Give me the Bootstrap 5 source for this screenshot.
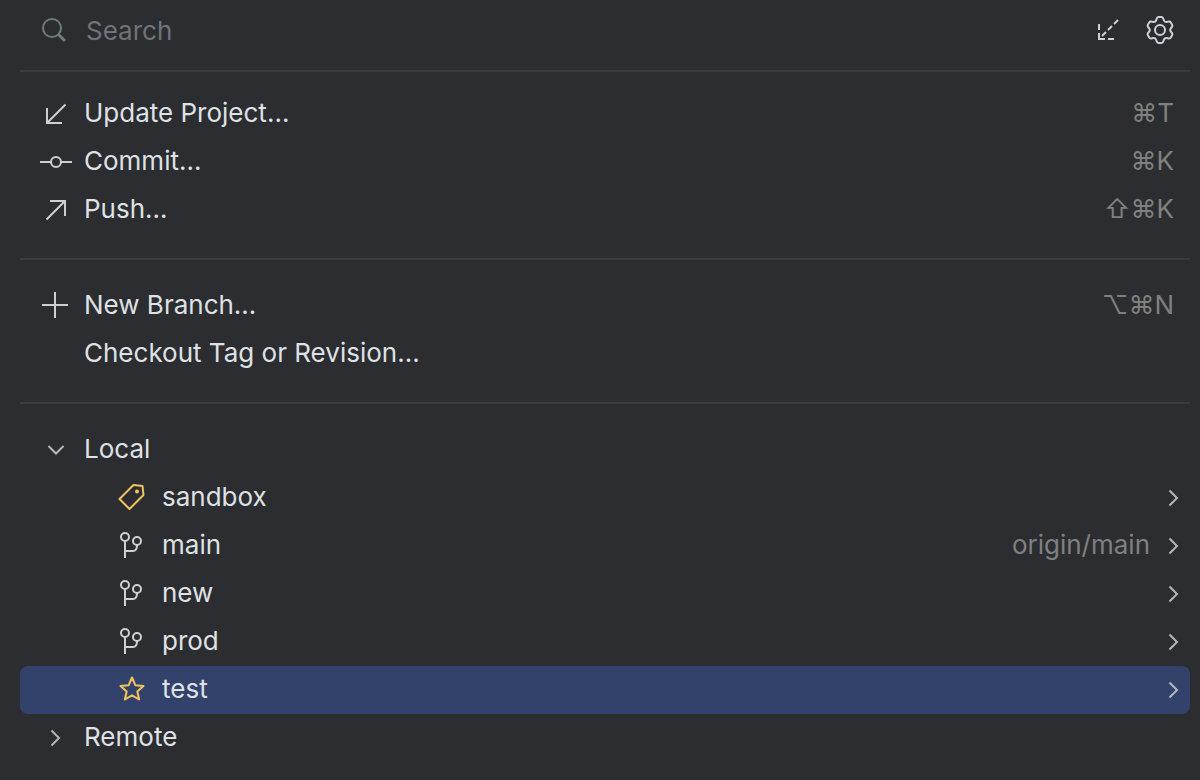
<!DOCTYPE html>
<html lang="en" data-bs-theme="dark">
<head>
<meta charset="utf-8">
<meta name="viewport" content="width=device-width, initial-scale=1">
<title>Git Branches</title>
<link href="https://cdn.jsdelivr.net/npm/bootstrap@5.3.0/dist/css/bootstrap.min.css" rel="stylesheet">
<style>
  body { background: #2b2d30; color: #dfe1e5; font-family: Inter, sans-serif; font-size: 26px; line-height: 46px; }
  .popup { min-height: 100vh; padding: 0 10px 0 20px; border-bottom: 3px solid #29262c; }
  .search-bar { height: 70px; padding: 0 14px 10px 18px; }
  .search-bar input { color: #dfe1e5; font-size: 26px; padding: 0; margin-left: 16px; }
  .search-bar input::placeholder { color: #6f737a; opacity: 1; }
  .tool { line-height: 0; color: #ced0d6; }
  .line { border-top: 2px solid #393b40; }
  .group { padding: 22px 0 24px; }
  .group-top { padding-top: 18px; }
  .entry { display: flex; align-items: center; width: 100%; height: 48px; padding: 0 16px 2px 20px; border: 0; border-radius: 8px; background: none; color: inherit; text-align: left; }
  .entry svg, .tool svg, .search-bar svg { flex: none; }
  .entry svg { color: #ced0d6; }
  .entry .label { margin-left: 12px; }
  .entry .label-plain { margin-left: 44px; }
  .branch { padding: 0 0 2px 96px; }
  .branch .label { margin-left: 14px; }
  .entry .chevron { color: #b4b8bf; }
  .selected { background: #33426b; }
  .hint { color: #808080; }
  .entry .fav { color: #f2c55c; }
</style>
</head>
<body>
<svg class="d-none" aria-hidden="true">
  <symbol id="chevron-right" viewBox="0 0 32 32"><path d="M11.500 9.500L19 17L11.500 24.500" fill="none" stroke="currentColor" stroke-width="2"/></symbol>
  <symbol id="branch" viewBox="0 0 32 32"><g fill="none" stroke="currentColor" stroke-width="2"><circle cx="9" cy="8" r="4"/><circle cx="21" cy="12" r="4"/><path d="M9 12V29M9 22H17Q21 22 21 16"/></g></symbol>
</svg>
<main class="popup">
  <form class="search-bar d-flex align-items-center" role="search">
    <svg width="32" height="32" viewBox="0 0 32 32" fill="none" stroke="#6f7a80" aria-hidden="true"><circle cx="14" cy="14" r="9" stroke-width="2"/><path d="M20 20L27 27" stroke-width="3"/></svg>
    <input type="text" class="form-control-plaintext flex-grow-1" placeholder="Search" aria-label="Search">
    <button type="button" class="tool btn p-0 border-0 me-4" aria-label="Fetch"><svg width="32" height="32" viewBox="0 0 32 32" fill="none" stroke="currentColor" stroke-width="2"><path d="M11 10V16M11 19V25H17M20 25H26M14 22L18 18M20 16L24 12M26 10L30 6"/></svg></button>
    <button type="button" class="tool btn p-0 border-0" aria-label="Settings"><svg width="32" height="32" viewBox="0 0 32 32" fill="none" stroke="currentColor" stroke-width="2" stroke-linejoin="round"><circle cx="16" cy="16" r="5"/><path d="M14.500 3H17.500Q18.600 3 19 4L20 6.500Q20.700 8.200 22.500 8L25 7.600Q26.200 7.500 26.800 8.500L28.200 11Q28.700 12 28 13L26.500 14.800Q25.700 16 26.500 17.200L28 19Q28.700 20 28.200 21L26.800 23.500Q26.200 24.500 25 24.400L22.500 24Q20.700 23.800 20 25.500L19 28Q18.600 29 17.500 29H14.500Q13.400 29 13 28L12 25.500Q11.300 23.800 9.500 24L7 24.400Q5.800 24.500 5.200 23.500L3.800 21Q3.300 20 4 19L5.500 17.200Q6.300 16 5.500 14.800L4 13Q3.300 12 3.800 11L5.200 8.500Q5.800 7.500 7 7.600L9.500 8Q11.300 8.200 12 6.500L13 4Q13.400 3 14.500 3Z"/></svg></button>
  </form>

  <section class="line group group-top" aria-label="Project actions">
    <button class="entry"><svg width="32" height="32" viewBox="0 0 32 32" fill="none" stroke="currentColor" stroke-width="2"><path d="M25.500 7.500L7 26M7 11V26H22"/></svg><span class="label">Update Project…</span><span class="hint ms-auto">⌘T</span></button>
    <button class="entry"><svg width="32" height="32" viewBox="0 0 32 32" fill="none" stroke="currentColor" stroke-width="2"><circle cx="16" cy="17" r="5"/><path d="M0 17H11M21 17H32"/></svg><span class="label">Commit…</span><span class="hint ms-auto">⌘K</span></button>
    <button class="entry"><svg width="32" height="32" viewBox="0 0 32 32" fill="none" stroke="currentColor" stroke-width="2"><path d="M6.500 26.500L25 8M10 8H25V23"/></svg><span class="label">Push…</span><span class="hint ms-auto">⇧⌘K</span></button>
  </section>

  <section class="line group" aria-label="Branch actions">
    <button class="entry"><svg width="32" height="32" viewBox="0 0 32 32" fill="none" stroke="currentColor" stroke-width="2"><path d="M15 3V29M2 16H28"/></svg><span class="label">New Branch…</span><span class="hint ms-auto">⌥⌘N</span></button>
    <button class="entry"><span class="label-plain">Checkout Tag or Revision…</span></button>
  </section>

  <section class="line group" aria-label="Branches">
    <button class="entry" aria-expanded="true"><svg class="chevron" width="32" height="32" viewBox="0 0 32 32" fill="none" stroke="currentColor" stroke-width="2"><path d="M8.500 13L16 20.500L23.500 13"/></svg><span class="label">Local</span></button>
    <button class="entry branch"><svg class="fav" width="32" height="32" viewBox="0 0 32 32" fill="none" stroke="currentColor" stroke-width="2" stroke-linejoin="round"><path d="M17.500 4L26.500 5L27.500 14L13.500 28L3.500 18Z"/><circle cx="21" cy="10.500" r="2" fill="currentColor" stroke="none"/></svg><span class="label">sandbox</span><svg class="chevron ms-auto" width="32" height="32"><use href="#chevron-right"/></svg></button>
    <button class="entry branch"><svg width="32" height="32"><use href="#branch"/></svg><span class="label">main</span><span class="hint ms-auto me-2">origin/main</span><svg class="chevron" width="32" height="32"><use href="#chevron-right"/></svg></button>
    <button class="entry branch"><svg width="32" height="32"><use href="#branch"/></svg><span class="label">new</span><svg class="chevron ms-auto" width="32" height="32"><use href="#chevron-right"/></svg></button>
    <button class="entry branch"><svg width="32" height="32"><use href="#branch"/></svg><span class="label">prod</span><svg class="chevron ms-auto" width="32" height="32"><use href="#chevron-right"/></svg></button>
    <button class="entry branch selected"><svg class="fav" width="32" height="32" viewBox="0 0 32 32" fill="none" stroke="currentColor" stroke-width="2" stroke-linejoin="round"><path d="M16 4.500L19.300 12.200L27.500 13L21.300 18.500L23.200 26.500L16 22.300L8.800 26.500L10.700 18.500L4.500 13L12.700 12.200Z"/></svg><span class="label">test</span><svg class="chevron ms-auto" width="32" height="32"><use href="#chevron-right"/></svg></button>
    <button class="entry" aria-expanded="false"><svg class="chevron" width="32" height="32"><use href="#chevron-right"/></svg><span class="label">Remote</span></button>
  </section>
</main>
<script src="https://cdn.jsdelivr.net/npm/bootstrap@5.3.0/dist/js/bootstrap.bundle.min.js"></script>
</body>
</html>
